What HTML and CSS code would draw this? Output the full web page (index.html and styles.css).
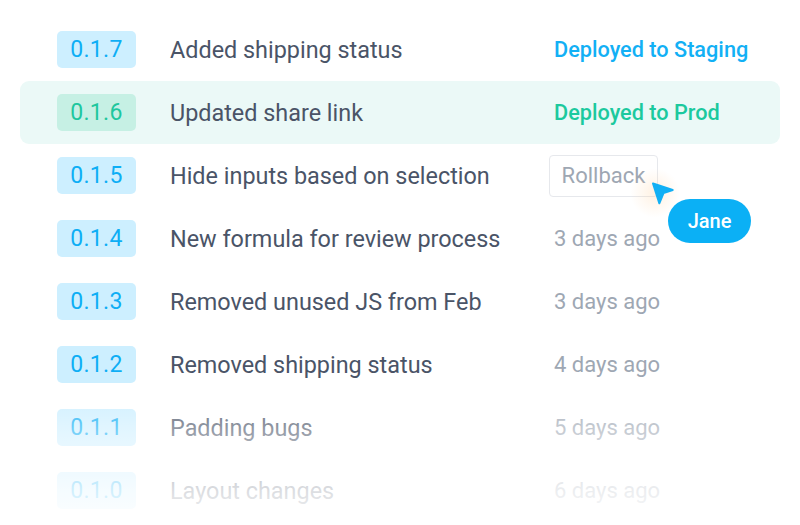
FILE: index.html
```html
<!DOCTYPE html>
<html>
<head>
<meta charset="utf-8">
<link rel="stylesheet" href="styles.css">
</head>
<body>
<div class="list">
  <div class="row">
    <span class="badge">0.1.7</span>
    <span class="desc">Added shipping status</span>
    <span class="status staging">Deployed to Staging</span>
  </div>
  <div class="row active">
    <span class="badge green">0.1.6</span>
    <span class="desc">Updated share link</span>
    <span class="status prod">Deployed to Prod</span>
  </div>
  <div class="row">
    <span class="badge">0.1.5</span>
    <span class="desc">Hide inputs based on selection</span>
    <span class="status-cell"><button class="rollback">Rollback</button></span>
  </div>
  <div class="row">
    <span class="badge">0.1.4</span>
    <span class="desc">New formula for review process</span>
    <span class="time">3 days ago</span>
  </div>
  <div class="row">
    <span class="badge">0.1.3</span>
    <span class="desc">Removed unused JS from Feb</span>
    <span class="time">3 days ago</span>
  </div>
  <div class="row">
    <span class="badge">0.1.2</span>
    <span class="desc">Removed shipping status</span>
    <span class="time">4 days ago</span>
  </div>
  <div class="row">
    <span class="badge">0.1.1</span>
    <span class="desc">Padding bugs</span>
    <span class="time">5 days ago</span>
  </div>
  <div class="row">
    <span class="badge">0.1.0</span>
    <span class="desc">Layout changes</span>
    <span class="time">6 days ago</span>
  </div>
</div>
<div class="fade"></div>
<div class="glow"></div>
<svg class="cursor" width="26" height="26" viewBox="0 0 26 26">
  <path d="M3 2.5 L22.7 9 L13.5 12 L9.3 22.3 Z" fill="#12b0f5" stroke="#12b0f5" stroke-width="2" stroke-linejoin="round"/>
</svg>
<div class="user">Jane</div>
</body>
</html>
```
FILE: styles.css
```css
* { box-sizing: border-box; }
html, body {
  margin: 0;
  padding: 0;
  background: #ffffff;
  width: 800px;
  height: 525px;
  overflow: hidden;
  font-family: Roboto, "Noto Sans", sans-serif;
}
.list {
  padding: 18px 20px 0 20px;
  display: flex;
  flex-direction: column;
}
.row {
  height: 63px;
  display: grid;
  grid-template-columns: 79px 418px 1fr;
  align-items: center;
  padding-left: 37px;
  border-radius: 9px;
}
.row.active {
  background: #ebf9f7;
}
.badge {
  width: 79px;
  height: 37px;
  border-radius: 5px;
  background: #cdefff;
  color: #0eaef5;
  font-size: 23px;
  display: flex;
  align-items: center;
  justify-content: center;
  letter-spacing: 0.3px;
}
.badge.green {
  background: #c6f0e4;
  color: #1ec79e;
}
.desc {
  padding-left: 34px;
  font-size: 23.4px;
  color: #4a5467;
}
.status {
  font-size: 21.7px;
  font-weight: 500;
}
.staging { color: #12b0f5; }
.prod { color: #1cc99e; }
.time {
  font-size: 22px;
  font-weight: 400;
  color: #9ea7b3;
}
.status-cell { display: flex; }
.rollback {
  margin-left: -5px;
  width: 109px;
  height: 42px;
  border: 1.5px solid #e6e8ec;
  border-radius: 4px;
  background: #fff;
  font-family: Roboto, "Noto Sans", sans-serif;
  font-size: 22px;
  font-weight: 400;
  color: #9ea7b3;
  padding: 0;
}
.fade {
  position: absolute;
  left: 0;
  top: 385px;
  width: 800px;
  height: 140px;
  background: linear-gradient(to bottom, rgba(255,255,255,0) 0%, rgba(255,255,255,0.45) 35%, rgba(255,255,255,0.8) 75%, rgba(255,255,255,0.95) 100%);
}
.glow {
  position: absolute;
  left: 630px;
  top: 168px;
  width: 50px;
  height: 50px;
  border-radius: 50%;
  background: radial-gradient(circle, rgba(255,200,140,0.25) 0%, rgba(255,220,180,0) 70%);
}
.cursor {
  position: absolute;
  left: 650px;
  top: 181px;
}
.user {
  position: absolute;
  left: 668px;
  top: 199px;
  width: 83px;
  height: 44px;
  border-radius: 22px;
  background: #0bb0f5;
  color: #fff;
  font-size: 20px;
  font-weight: 500;
  display: flex;
  align-items: center;
  justify-content: center;
}
```
